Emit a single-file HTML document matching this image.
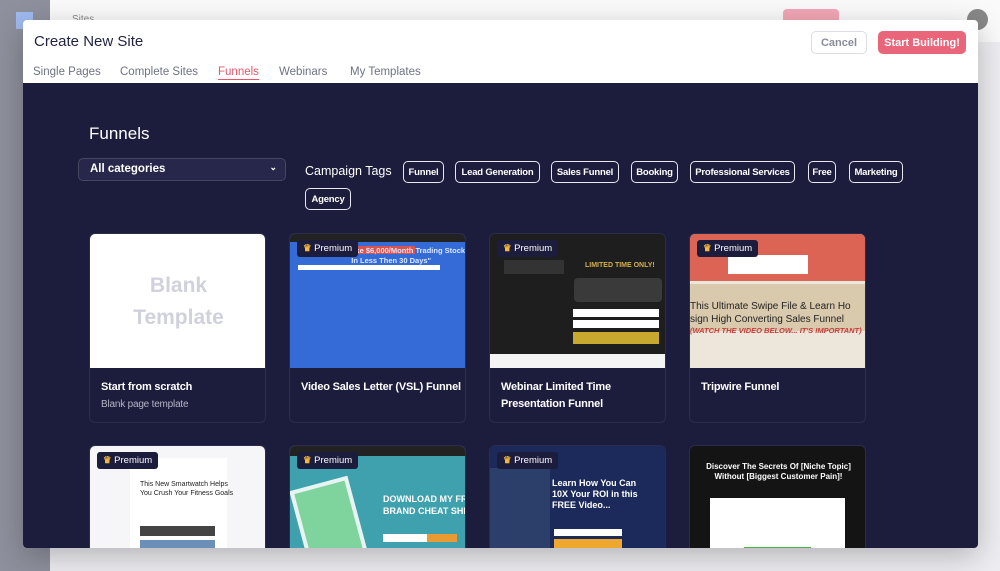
<!DOCTYPE html>
<html><head><meta charset="utf-8"><style>
*{box-sizing:border-box;margin:0;padding:0}
body{width:1000px;height:571px;overflow:hidden;background:#eeeef2;font-family:"Liberation Sans",sans-serif;position:relative}
.side{position:absolute;left:0;top:0;width:50px;height:571px;background:#8e909d}
.top{position:absolute;left:50px;top:0;right:0;height:42px;background:#fafafb}
.modal{position:absolute;left:23px;top:20px;width:955px;height:528px;background:#fff;border-radius:4px;overflow:hidden;box-shadow:0 8px 30px rgba(0,0,0,.25)}
.h{position:absolute;left:11px;top:13px;font-size:15px;color:#1f2340}
.btn{position:absolute;top:11px;height:23px;border-radius:5px;font-size:11px;font-weight:bold;display:flex;align-items:center;justify-content:center}
.tabs{position:absolute;top:46px;left:10px;font-size:11.5px;color:#6f7283}
.tabs span{position:absolute;white-space:nowrap}
.body{position:absolute;left:0;top:63px;width:955px;height:465px;background:#1c1c3c}
.t{position:absolute;color:#fff}
.tag{position:absolute;height:22px;border:1.5px solid #e8e8ee;border-radius:5px;color:#fff;font-size:9.5px;font-weight:bold;display:flex;align-items:center;justify-content:center;white-space:nowrap;letter-spacing:-0.2px}
.card{position:absolute;width:177px;height:190px;border:1px solid #2b2c4c;border-radius:6px;overflow:hidden;background:#1c1c3c}
.img{position:absolute;left:0;top:0;width:177px;height:134px;overflow:hidden}
.ct{position:absolute;left:11px;top:145px;color:#fff;font-weight:bold;font-size:11px;line-height:17px;letter-spacing:-0.2px;white-space:nowrap}
.prem{position:absolute;left:7px;top:6px;background:#1c1c3c;color:#fff;font-size:9.5px;padding:3px 6px;border-radius:3px;z-index:2}
.prem b{color:#f4b73c}
</style></head><body>
<div class="side"><div style="position:absolute;left:16px;top:12px;width:17px;height:17px;background:#9fbaf0"></div></div>
<div class="top">
<div style="position:absolute;left:22px;top:14px;font-size:10px;color:#888">Sites</div>
<div style="position:absolute;left:733px;top:9px;width:56px;height:21px;background:#f3a7b5;border-radius:4px"></div>
<div style="position:absolute;left:917px;top:9px;width:21px;height:21px;background:#888;border-radius:50%"></div>
</div>
<div class="modal">
<div class="h">Create New Site</div>
<div class="btn" style="left:788px;width:56px;border:1.5px solid #dcdde3;color:#8a8c9c">Cancel</div>
<div class="btn" style="left:855px;width:88px;background:#e8657a;color:#fff">Start Building!</div>
<div class="tabs">
<span style="left:0">Single Pages</span><span style="left:87px">Complete Sites</span>
<span style="left:185px;color:#e5566b;border-bottom:1px solid #e5566b;padding-bottom:1px">Funnels</span>
<span style="left:246px">Webinars</span><span style="left:317px">My Templates</span></div>
<div class="body">
<div class="t" style="left:66px;top:41px;font-size:17px">Funnels</div>
<div style="position:absolute;left:55px;top:75px;width:208px;height:23px;border:1px solid #45465f;border-radius:5px;background:#26274a;color:#fff;font-weight:bold;font-size:11.5px;padding:4px 11px">All categories<span style="position:absolute;right:8px;top:3px;font-size:9px">⌄</span></div>
<div class="t" style="left:282px;top:81px;font-size:12.5px">Campaign Tags</div>
<div class="tag" style="left:380px;top:78px;width:41px">Funnel</div>
<div class="tag" style="left:432px;top:78px;width:85px">Lead Generation</div>
<div class="tag" style="left:528px;top:78px;width:68px">Sales Funnel</div>
<div class="tag" style="left:608px;top:78px;width:47px">Booking</div>
<div class="tag" style="left:667px;top:78px;width:105px">Professional Services</div>
<div class="tag" style="left:785px;top:78px;width:28px">Free</div>
<div class="tag" style="left:826px;top:78px;width:54px">Marketing</div>
<div class="tag" style="left:282px;top:105px;width:46px">Agency</div>

<div class="card" style="left:66px;top:150px"><div class="img" style="background:#fff"><div style="position:absolute;top:36px;width:100%;text-align:center;font-size:21px;font-weight:bold;color:#d0d1dc;line-height:32px">Blank<br>Template</div></div><div class="ct">Start from scratch<div style="font-weight:normal;font-size:10px;color:#b5b6c4">Blank page template</div></div></div>

<div class="card" style="left:266px;top:150px"><div class="img" style="background:#356bd6"><div style="height:8px;background:#222"></div><div style="position:absolute;left:55px;top:12px;width:70px;height:8px;background:#d9534f"></div><div style="position:absolute;left:55px;top:12px;color:#dbe8ff;font-size:7.5px;font-weight:bold;line-height:10px;white-space:nowrap">Make $6,000/Month Trading Stocks<br>&nbsp;&nbsp;&nbsp;In Less Then 30 Days"</div><div style="position:absolute;left:8px;top:31px;width:142px;height:5px;background:#fff"></div></div><div class="prem"><b>♛</b> Premium</div><div class="ct">Video Sales Letter (VSL) Funnel</div></div>

<div class="card" style="left:466px;top:150px"><div class="img" style="background:#1e1e1e"><div style="position:absolute;left:14px;top:26px;width:60px;height:14px;background:#333"></div><div style="position:absolute;left:95px;top:28px;color:#d4b04a;font-size:7px;font-weight:bold">LIMITED TIME ONLY!</div><div style="position:absolute;left:84px;top:44px;width:88px;height:24px;background:#3a3a3a;border-radius:4px"></div><div style="position:absolute;left:83px;top:75px;width:86px;height:8px;background:#fff"></div><div style="position:absolute;left:83px;top:86px;width:86px;height:8px;background:#fff"></div><div style="position:absolute;left:83px;top:98px;width:86px;height:12px;background:#c9a82f"></div><div style="position:absolute;left:0;top:120px;width:177px;height:14px;background:#f4f4f4"></div></div><div class="prem"><b>♛</b> Premium</div><div class="ct">Webinar Limited Time<br>Presentation Funnel</div></div>

<div class="card" style="left:666px;top:150px"><div class="img" style="background:#ede6da"><div style="height:47px;background:#dc6455"></div><div style="position:absolute;left:38px;top:21px;width:80px;height:19px;background:#fff"></div><div style="position:absolute;left:0;top:50px;width:177px;height:47px;background:#d9c9ad"></div><div style="position:absolute;left:0;top:66px;font-size:10px;color:#222;white-space:nowrap;line-height:13px">This Ultimate Swipe File &amp; Learn Ho<br>sign High Converting Sales Funnel</div><div style="position:absolute;left:0;top:92px;font-size:7.5px;color:#c93b3b;font-weight:bold;font-style:italic;white-space:nowrap">(WATCH THE VIDEO BELOW... IT'S IMPORTANT)</div></div><div class="prem"><b>♛</b> Premium</div><div class="ct">Tripwire Funnel</div></div>

<div class="card" style="left:66px;top:362px"><div class="img" style="background:#f6f6f8"><div style="position:absolute;left:40px;top:12px;width:97px;height:130px;background:#fff"></div><div style="position:absolute;left:50px;top:34px;font-size:7px;color:#222;line-height:9px">This New Smartwatch Helps<br>You Crush Your Fitness Goals</div><div style="position:absolute;left:50px;top:80px;width:75px;height:10px;background:#444"></div><div style="position:absolute;left:50px;top:94px;width:75px;height:40px;background:#6c8fb8"></div></div><div class="prem"><b>♛</b> Premium</div></div>

<div class="card" style="left:266px;top:362px"><div class="img" style="background:#3fa0ae"><div style="height:10px;background:#222"></div><div style="position:absolute;left:10px;top:36px;width:60px;height:90px;background:#7fd39c;transform:rotate(-15deg);border:4px solid #e8f4f4"></div><div style="position:absolute;left:93px;top:47px;color:#fff;font-size:9px;font-weight:bold;line-height:12px;white-space:nowrap">DOWNLOAD MY FREE<br>BRAND CHEAT SHEET</div><div style="position:absolute;left:93px;top:88px;width:44px;height:8px;background:#fff"></div><div style="position:absolute;left:137px;top:88px;width:30px;height:8px;background:#e89a35"></div></div><div class="prem"><b>♛</b> Premium</div></div>

<div class="card" style="left:466px;top:362px"><div class="img" style="background:#1b2a5a"><div style="position:absolute;left:0;top:22px;width:60px;height:112px;background:#2c3f6a"></div><div style="position:absolute;left:62px;top:32px;color:#fff;font-size:9px;font-weight:bold;line-height:11px">Learn How You Can<br>10X Your ROI in this<br>FREE Video...</div><div style="position:absolute;left:64px;top:83px;width:68px;height:7px;background:#fff"></div><div style="position:absolute;left:64px;top:93px;width:68px;height:10px;background:#eea82f"></div></div><div class="prem"><b>♛</b> Premium</div></div>

<div class="card" style="left:666px;top:362px"><div class="img" style="background:#141414"><div style="position:absolute;top:16px;width:100%;text-align:center;color:#fff;font-size:8px;font-weight:bold;line-height:10px">Discover The Secrets Of [Niche Topic]<br>Without [Biggest Customer Pain]!</div><div style="position:absolute;left:20px;top:52px;width:135px;height:90px;background:#fff"></div><div style="position:absolute;left:54px;top:101px;width:67px;height:8px;background:#4caf50"></div></div></div>
</div></div>
</body></html>
